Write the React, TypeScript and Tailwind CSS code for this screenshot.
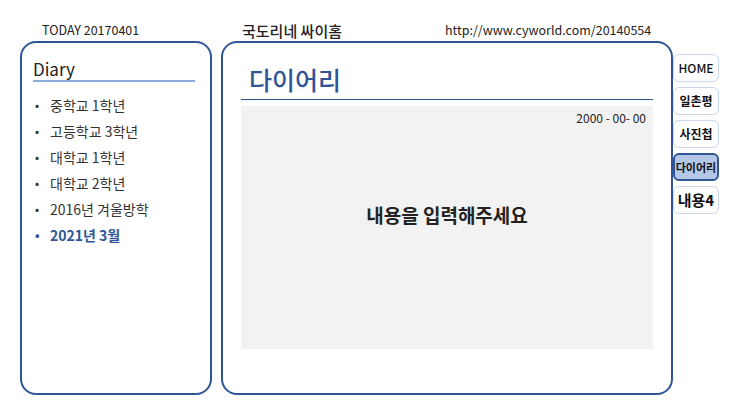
const FONT = "font-['Noto_Sans_CJK_KR','Noto_Sans',sans-serif]";

const DIARY_ITEMS = [
  "중학교 1학년",
  "고등학교 3학년",
  "대학교 1학년",
  "대학교 2학년",
  "2016년 겨울방학",
  "2021년 3월",
];

const TABS = [
  { label: "HOME", cls: "text-[12px] font-medium" },
  { label: "일촌평", cls: "text-[12px] font-bold" },
  { label: "사진첩", cls: "text-[12px] font-bold" },
  { label: "다이어리", cls: "text-[11px] font-bold", active: true },
  { label: "내용4", cls: "text-[15px] font-bold" },
];

// ── Header ───────────────────────────────────────────────────────────────────

function Header() {
  return (
    <div className="flex items-center h-[21px] text-[#222]">
      <span className="w-[242px] pl-[42px] text-[12.5px] leading-none">TODAY 20170401</span>
      <span className="w-[203px] text-[15px] font-medium leading-none">국도리네 싸이홈</span>
      <span className="text-[12.5px] leading-none">http://www.cyworld.com/20140554</span>
    </div>
  );
}

// ── Left sidebar ─────────────────────────────────────────────────────────────

function Sidebar() {
  return (
    <div className="w-[192px] h-[354px] shrink-0 rounded-[16px] border-2 border-[#2f5597] px-[11px] pt-[15px]">
      <div className="text-[17px] leading-[22px] text-[#222] border-b-2 border-[#8faadc] w-[162px]">
        Diary
      </div>
      <ul className="mt-[10px]">
        {DIARY_ITEMS.map((item, i) => {
          const last = i === DIARY_ITEMS.length - 1;
          return (
            <li
              key={item}
              className={`flex items-center h-[26px] text-[14px] ${
                last ? "font-bold text-[#2f5597]" : "text-[#333]"
              }`}
            >
              <span className="w-[17px] pl-[2px] text-[12px]">•</span>
              {item}
            </li>
          );
        })}
      </ul>
    </div>
  );
}

// ── Main panel ───────────────────────────────────────────────────────────────

function MainPanel() {
  return (
    <div className="relative z-10 w-[452px] h-[354px] shrink-0 rounded-[16px] border-2 border-[#2f5597] bg-white px-[18px] pt-[20px]">
      <div className="border-b border-[#2f5597] h-[37px] pl-[8px]">
        <span className="text-[25px] font-medium leading-[32px] text-[#2f5597]">다이어리</span>
      </div>
      <div className="mt-[6px] h-[243px] bg-[#f2f2f2] flex flex-col">
        <div className="text-right pr-[7px] pt-[3px] text-[12px] leading-[18px] text-[#222]">
          2000 - 00- 00
        </div>
        <div className="mt-[76px] text-center text-[19px] font-bold leading-[24px] text-[#222]">
          내용을 입력해주세요
        </div>
      </div>
    </div>
  );
}

// ── Side tabs ────────────────────────────────────────────────────────────────

function Tabs() {
  return (
    <div className="flex flex-col gap-[5px] pt-[13px]">
      {TABS.map((t) => (
        <div
          key={t.label}
          className={`w-[46px] h-[28px] flex items-center justify-center rounded-[6px] text-[#111] ${t.cls} ${
            t.active
              ? "bg-[#b4c7e7] border-2 border-[#2f5597] relative z-20"
              : "bg-white border border-[#c9d6ee]"
          }`}
        >
          {t.label}
        </div>
      ))}
    </div>
  );
}

export default function App() {
  return (
    <div className={`w-[740px] h-[416px] bg-white pt-[20px] ${FONT}`}>
      <Header />
      <div className="flex pl-[20px] gap-[9px]">
        <Sidebar />
        <div className="flex">
          <MainPanel />
          <Tabs />
        </div>
      </div>
    </div>
  );
}
